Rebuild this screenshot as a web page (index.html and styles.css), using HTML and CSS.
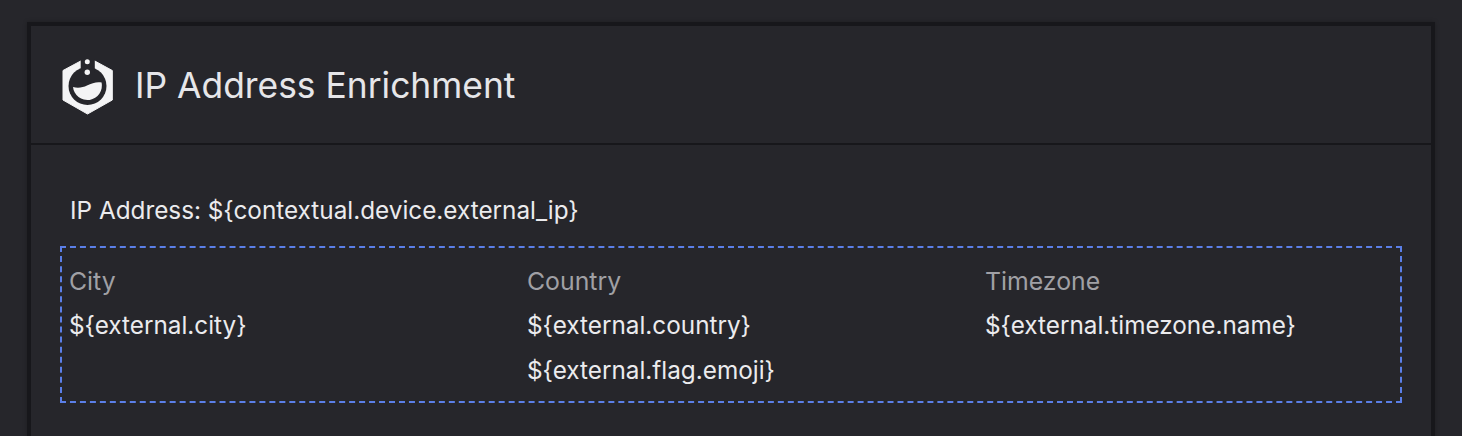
FILE: index.html
```html
<!DOCTYPE html>
<html lang="en">
  <head>
    <meta charset="UTF-8" />
    <meta name="viewport" content="width=device-width, initial-scale=1.0" />
    <title>IP Address Enrichment</title>
    <link rel="stylesheet" href="styles.css">
  </head>
  <body>
    <main class="card">
      <header class="card-header">
        <svg class="logo" viewBox="0 0 52 57" width="52" height="57" aria-hidden="true">
          <path class="logo-hex" d="M18.700 2L1 11.500V41L25.500 55L50.300 41V11.500L32.800 2Z" />
          <circle class="logo-cut" cx="25.500" cy="27" r="19" />
          <path class="logo-cut" d="M18.700 0H32.800V14H18.700Z" />
          <path class="logo-liquid" d="M11 28C16 29.500 21 28.500 25 26.500C30 24 35 22.500 39.600 23.500A14.500 14.500 0 1 1 11 28Z" />
          <circle class="logo-bubble" cx="25.300" cy="2.800" r="2.500" />
          <circle class="logo-bubble" cx="25.300" cy="13.300" r="2.700" />
        </svg>
        <h1 class="title">IP Address Enrichment</h1>
      </header>

      <section class="card-body">
        <p class="ip-line">IP Address: ${contextual.device.external_ip}</p>
        <div class="fields">
          <div class="field">
            <span class="field-label">City</span>
            <span class="field-value">${external.city}</span>
          </div>
          <div class="field">
            <span class="field-label">Country</span>
            <span class="field-value">${external.country}</span>
            <span class="field-value">${external.flag.emoji}</span>
          </div>
          <div class="field">
            <span class="field-label">Timezone</span>
            <span class="field-value">${external.timezone.name}</span>
          </div>
        </div>
      </section>
    </main>
  </body>
</html>
```

FILE: styles.css
```css
* {
  margin: 0;
  padding: 0;
  box-sizing: border-box;
}
html,
body {
  height: 436px;
  overflow: hidden;
}
body {
  font-family: Inter, "Liberation Sans", sans-serif;
  background: #26262b;
  color: #ebebee;
  padding: 22px 27px 0;
}

.card {
  height: 414px;
  border: 4px solid #17171b;
  border-bottom: none;
  background: #26262b;
  box-shadow: 0 0 4px rgba(0, 0, 0, 0.25);
}
.card-header {
  display: flex;
  align-items: center;
  gap: 21px;
  height: 119px;
  padding-left: 31px;
  border-bottom: 2px solid #17171b;
}
.logo {
  flex: none;
  margin-top: 5px;
}
.logo-hex,
.logo-liquid,
.logo-bubble {
  fill: #f4f4f5;
}
.logo-hex {
  stroke: #f4f4f5;
  stroke-width: 1;
  stroke-linejoin: round;
}
.logo-cut {
  fill: #26262b;
}
.title {
  font-size: 35.400px;
  font-weight: 400;
  color: #e6e6e9;
  margin-top: 2px;
}

.card-body {
  padding: 47px 29px 0;
}
.ip-line {
  font-size: 24.300px;
  line-height: 36px;
  padding-left: 10px;
  margin-bottom: 18px;
}
.fields {
  display: grid;
  grid-template-columns: repeat(3, 458px);
  padding: 15px 7px 13px;
  border: 2px dashed #5b7fe8;
}
.field {
  display: flex;
  flex-direction: column;
  gap: 9px;
}
.field-label {
  font-size: 24.800px;
  line-height: 36px;
  margin-bottom: -1px;
  color: #a0a0a5;
}
.field-value {
  font-size: 24.300px;
  line-height: 36px;
}
```
